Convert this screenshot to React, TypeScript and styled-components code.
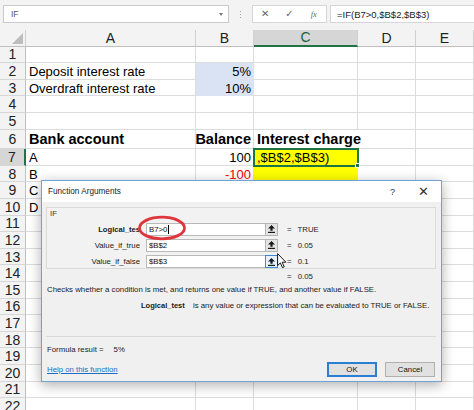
import React from "react";
import styled, { createGlobalStyle } from "styled-components";

const GlobalStyle = createGlobalStyle`
  html, body { margin: 0; padding: 0; background: #fff; }
  body { font-family: "Liberation Sans", Arial, sans-serif; }
  * { box-sizing: border-box; }
`;

const Screen = styled.div`
  position: relative;
  width: 474px;
  height: 410px;
  overflow: hidden;
  background: #fff;
  display: flex;
  flex-direction: column;
`;

/* ---------- formula bar ---------- */
const TopBar = styled.div`
  flex: none;
  height: 30px;
  background: #f3f3f3;
  display: flex;
  align-items: flex-start;
  padding: 5px 0 0 3px;
`;

const NameBox = styled.div`
  width: 226px;
  height: 18px;
  background: #fff;
  border: 1px solid #cacaca;
  display: flex;
  align-items: center;
  justify-content: space-between;
  padding: 0 5px 0 7px;
  font-size: 8.5px;
  color: #555;
`;

const DropArrow = styled.span`
  width: 0;
  height: 0;
  border-left: 2.5px solid transparent;
  border-right: 2.5px solid transparent;
  border-top: 3px solid #7a7a7a;
`;

const Grip = styled.div`
  width: 23px;
  height: 18px;
  display: flex;
  flex-direction: column;
  align-items: center;
  justify-content: center;
  gap: 2px;
`;

const GripDot = styled.span`
  width: 1px;
  height: 1px;
  background: #a8a8a8;
`;

const FxGroup = styled.div`
  width: 75px;
  height: 18px;
  background: #fff;
  border: 1px solid #d6d6d6;
  display: grid;
  grid-template-columns: repeat(3, 1fr);
  align-items: center;
  justify-items: center;
`;

const FxGlyph = styled.span<{ $green?: boolean; $italic?: boolean }>`
  font-size: ${(p) => (p.$italic ? "8.5px" : "10px")};
  font-family: ${(p) => (p.$italic ? '"Liberation Serif", serif' : '"DejaVu Sans", sans-serif')};
  font-style: ${(p) => (p.$italic ? "italic" : "normal")};
  color: ${(p) => (p.$green ? "#4d7a52" : "#666")};
  line-height: 1;
`;

const FormulaInput = styled.div`
  margin-left: 3px;
  flex: 1;
  height: 18px;
  background: #fff;
  border: 1px solid #d6d6d6;
  border-right: none;
  display: flex;
  align-items: center;
  padding-left: 6px;
  font-size: 9.5px;
  color: #222;
`;

/* ---------- sheet ---------- */
const Sheet = styled.div`
  flex: none;
  display: grid;
  grid-template-columns: 26px 170px 58px 104px 58px 58px;
  grid-template-rows: 16.7px repeat(5, 16.6px) 19.6px repeat(16, 16.6px);
`;

const Corner = styled.div`
  background: #f3f3f3;
  border-right: 1px solid #cfcfcf;
  border-bottom: 1px solid #bfbfbf;
  display: flex;
  align-items: flex-end;
  justify-content: flex-end;
  padding: 0 2px 2px 0;
`;

const ColHeader = styled.div<{ $active?: boolean }>`
  background: ${(p) => (p.$active ? "#d6d6d6" : "#f3f3f3")};
  border-right: 1px solid #d0d0d0;
  border-bottom: ${(p) => (p.$active ? "2px solid #217346" : "1px solid #bfbfbf")};
  display: flex;
  align-items: center;
  justify-content: center;
  font-size: 14px;
  color: ${(p) => (p.$active ? "#1e5e3a" : "#222")};
  line-height: 1;
`;

const RowHeader = styled.div<{ $active?: boolean }>`
  background: ${(p) => (p.$active ? "#d6d6d6" : "#f3f3f3")};
  border-right: ${(p) => (p.$active ? "2px solid #217346" : "1px solid #bfbfbf")};
  border-bottom: 1px solid #d6d6d6;
  display: flex;
  align-items: center;
  justify-content: center;
  font-size: 14px;
  color: #222;
  line-height: 1;
`;

const Cell = styled.div<{
  $align?: "left" | "right";
  $bold?: boolean;
  $color?: string;
  $bg?: string;
  $overflow?: boolean;
  $selected?: boolean;
}>`
  position: relative;
  z-index: ${(p) => (p.$selected ? 3 : p.$overflow ? 1 : 0)};
  background: ${(p) => p.$bg ?? "transparent"};
  border-right: 1px solid ${(p) => (p.$bg ? p.$bg : p.$overflow ? "transparent" : "#dcdcdc")};
  border-bottom: 1px solid ${(p) => p.$bg ?? "#dcdcdc"};
  outline: ${(p) => (p.$selected ? "2px solid #217346" : "none")};
  outline-offset: -1px;
  display: flex;
  align-items: center;
  justify-content: ${(p) => (p.$align === "right" ? "flex-end" : "flex-start")};
  padding: 1px 2px 0 3px;
  font-size: ${(p) => (p.$bold ? "14.5px" : "13px")};
  font-weight: ${(p) => (p.$bold ? 700 : 400)};
  color: ${(p) => p.$color ?? "#000"};
  white-space: nowrap;
  overflow: visible;
  line-height: 1;
`;

const FillHandle = styled.span`
  position: absolute;
  right: -3px;
  bottom: -3px;
  width: 5px;
  height: 5px;
  background: #217346;
  border: 1px solid #fff;
`;

/* ---------- dialog ---------- */
const Dialog = styled.div`
  position: absolute;
  left: 41px;
  top: 180px;
  width: 401px;
  height: 202px;
  border: 1px solid #6fa3d6;
  background: #f0f0f0;
  box-shadow: 0 3px 12px rgba(0, 0, 0, 0.32);
  display: flex;
  flex-direction: column;
  font-size: 7.8px;
  color: #1a1a1a;
  z-index: 10;
`;

const TitleBar = styled.div`
  flex: none;
  height: 21px;
  background: #fff;
  display: flex;
  align-items: center;
  padding: 0 2px 0 6px;
`;

const Title = styled.span`
  font-size: 8.2px;
  color: #222;
`;

const TitleButton = styled.span<{ $first?: boolean }>`
  width: 31px;
  height: 21px;
  display: flex;
  align-items: center;
  justify-content: center;
  margin-left: ${(p) => (p.$first ? "auto" : "0")};
  font-size: ${(p) => (p.$first ? "9px" : "13px")};
  font-family: ${(p) => (p.$first ? '"Liberation Sans", sans-serif' : '"DejaVu Sans", sans-serif')};
  font-weight: 300;
  color: #333;
`;

const Body = styled.div`
  flex: 1;
  display: flex;
  flex-direction: column;
  padding: 0 5px 0 4px;
`;

const GroupBox = styled.div`
  margin-top: 5px;
  height: 62px;
  border: 1px solid #dadada;
  background: #f2f2f2;
  padding: 1px 0 0 0;
  display: flex;
  flex-direction: column;
`;

const GroupLabel = styled.div`
  padding-left: 3px;
  height: 10px;
  line-height: 10px;
  color: #333;
`;

const ArgList = styled.div`
  margin-top: 2px;
  display: grid;
  grid-auto-rows: 16.3px;
`;

const ArgRow = styled.div`
  display: flex;
  align-items: center;
`;

const ArgLabel = styled.span<{ $bold?: boolean }>`
  flex: none;
  width: 93px;
  margin-right: 6px;
  display: flex;
  justify-content: flex-end;
  font-weight: ${(p) => (p.$bold ? 700 : 400)};
  font-size: ${(p) => (p.$bold ? "7.6px" : "7.8px")};
  white-space: nowrap;
`;

const ArgInput = styled.div`
  width: 119px;
  height: 13px;
  background: #fff;
  border: 1px solid #b9b9b9;
  border-right: none;
  display: flex;
  align-items: center;
  padding-left: 2px;
  color: #111;
`;

const Caret = styled.span`
  display: inline-block;
  width: 1px;
  height: 9px;
  background: #000;
  margin-left: 0.5px;
`;

const RefButton = styled.div<{ $hover?: boolean }>`
  width: 13px;
  height: 13px;
  background: ${(p) => (p.$hover ? "#e5f1fb" : "#e4e4e4")};
  border: 1px solid ${(p) => (p.$hover ? "#3c8ad6" : "#b4b4b4")};
  display: flex;
  align-items: center;
  justify-content: center;
`;

const ArgResult = styled.span<{ $flush?: boolean }>`
  margin-left: ${(p) => (p.$flush ? "0" : "9px")};
  word-spacing: 4px;
`;

const ResultLine = styled.div<{ $top: number; $indent: number }>`
  margin-top: ${(p) => p.$top}px;
  padding-left: ${(p) => p.$indent}px;
  height: 10px;
  line-height: 10px;
  white-space: nowrap;
`;

const Strong = styled.span`
  font-weight: 700;
  font-size: 7.5px;
  margin-right: 6px;
`;

const Separator = styled.div`
  margin-top: 25px;
  height: 1px;
  background: #d9d9d9;
`;

const ResultValue = styled.span`
  margin-left: 10px;
`;

const Footer = styled.div`
  margin-top: 7px;
  height: 15px;
  display: flex;
  align-items: center;
  padding: 0 1px 0 1px;
  gap: 8px;
`;

const HelpLink = styled.a`
  color: #1a6fc4;
  text-decoration: underline;
  margin-right: auto;
`;

const DlgButton = styled.button<{ $default?: boolean }>`
  width: 50px;
  height: 15px;
  padding: 0;
  font-family: "Liberation Sans", Arial, sans-serif;
  font-size: 7.8px;
  color: #111;
  background: #e1e1e1;
  border: 1px solid ${(p) => (p.$default ? "#2a7fd4" : "#b0b0b0")};
  box-shadow: ${(p) => (p.$default ? "inset 0 0 0 1px #2a7fd4" : "none")};
`;

const Circle = styled.svg`
  position: absolute;
  left: 96px;
  top: 33px;
  overflow: visible;
`;

const Pointer = styled.svg`
  position: absolute;
  left: 235px;
  top: 72px;
`;

const CornerTriangle = () => (
  <svg width="11" height="11" viewBox="0 0 11 11">
    <polygon points="11,0 11,11 0,11" fill="#bdbdbd" />
  </svg>
);

const RefIcon = () => (
  <svg width="7" height="8" viewBox="0 0 7 8">
    <polygon points="3.5,0 7,3.6 4.6,3.6 4.6,5.8 2.4,5.8 2.4,3.6 0,3.6" fill="#1a1a1a" />
    <rect x="0" y="6.8" width="7" height="1.2" fill="#1a1a1a" />
  </svg>
);

type ColKey = "A" | "B" | "C" | "D" | "E";
interface CellData {
  text?: string;
  align?: "left" | "right";
  bold?: boolean;
  color?: string;
  bg?: string;
  selected?: boolean;
  overflow?: boolean;
}

const COLS: ColKey[] = ["A", "B", "C", "D", "E"];
const ROW_COUNT = 22;

const DATA: Record<number, Partial<Record<ColKey, CellData>>> = {
  2: {
    A: { text: "Deposit interest rate" },
    B: { text: "5%", align: "right", bg: "#dae3f3" },
  },
  3: {
    A: { text: "Overdraft interest rate" },
    B: { text: "10%", align: "right", bg: "#dae3f3" },
  },
  6: {
    A: { text: "Bank account", bold: true },
    B: { text: "Balance", bold: true, align: "right" },
    C: { text: "Interest charge", bold: true, overflow: true },
  },
  7: {
    A: { text: "A" },
    B: { text: "100", align: "right" },
    C: { text: ",$B$2,$B$3)", bg: "#ffff00", selected: true },
  },
  8: {
    A: { text: "B" },
    B: { text: "-100", align: "right", color: "#ff0000" },
    C: { bg: "#ffff00" },
  },
  9: { A: { text: "C" }, C: { bg: "#ffff00" } },
  10: { A: { text: "D" }, C: { bg: "#ffff00" } },
};

const ARGS = [
  { label: "Logical_tes", bold: true, value: "B7>0", caret: true, result: "= TRUE" },
  { label: "Value_if_true", value: "$B$2", result: "= 0.05" },
  { label: "Value_if_false", value: "$B$3", hover: true, result: "= 0.1" },
];

export default function App() {
  const rows = Array.from({ length: ROW_COUNT }, (_, i) => i + 1);
  return (
    <>
      <GlobalStyle />
      <Screen>
        <TopBar>
          <NameBox>
            <span>IF</span>
            <DropArrow />
          </NameBox>
          <Grip>
            <GripDot />
            <GripDot />
            <GripDot />
          </Grip>
          <FxGroup>
            <FxGlyph>✕</FxGlyph>
            <FxGlyph>✓</FxGlyph>
            <FxGlyph $green $italic>
              fx
            </FxGlyph>
          </FxGroup>
          <FormulaInput>=IF(B7&gt;0,$B$2,$B$3)</FormulaInput>
        </TopBar>

        <Sheet>
          <Corner>
            <CornerTriangle />
          </Corner>
          {COLS.map((c) => (
            <ColHeader key={c} $active={c === "C"}>
              {c}
            </ColHeader>
          ))}
          {rows.map((r) => (
            <React.Fragment key={r}>
              <RowHeader $active={r === 7}>{r}</RowHeader>
              {COLS.map((c) => {
                const d = DATA[r]?.[c];
                return (
                  <Cell
                    key={c}
                    $align={d?.align}
                    $bold={d?.bold}
                    $color={d?.color}
                    $bg={d?.bg}
                    $overflow={d?.overflow}
                    $selected={d?.selected}
                  >
                    {d?.text}
                    {d?.selected && <FillHandle />}
                  </Cell>
                );
              })}
            </React.Fragment>
          ))}
        </Sheet>

        <Dialog>
          <TitleBar>
            <Title>Function Arguments</Title>
            <TitleButton $first>?</TitleButton>
            <TitleButton>✕</TitleButton>
          </TitleBar>
          <Body>
            <GroupBox>
              <GroupLabel>IF</GroupLabel>
              <ArgList>
                {ARGS.map((a) => (
                  <ArgRow key={a.label}>
                    <ArgLabel $bold={a.bold}>{a.label}</ArgLabel>
                    <ArgInput>
                      {a.value}
                      {a.caret && <Caret />}
                    </ArgInput>
                    <RefButton $hover={a.hover}>
                      <RefIcon />
                    </RefButton>
                    <ArgResult>{a.result}</ArgResult>
                  </ArgRow>
                ))}
              </ArgList>
            </GroupBox>
            <ResultLine $top={3} $indent={241}>
              <ArgResult $flush>= 0.05</ArgResult>
            </ResultLine>
            <ResultLine $top={3} $indent={1}>
              Checks whether a condition is met, and returns one value if TRUE, and another value if FALSE.
            </ResultLine>
            <ResultLine $top={6} $indent={95}>
              <Strong>Logical_test</Strong> is any value or expression that can be evaluated to TRUE or FALSE.
            </ResultLine>
            <Separator />
            <ResultLine $top={8} $indent={1}>
              Formula result =<ResultValue>5%</ResultValue>
            </ResultLine>
            <Footer>
              <HelpLink>Help on this function</HelpLink>
              <DlgButton $default>OK</DlgButton>
              <DlgButton>Cancel</DlgButton>
            </Footer>
          </Body>

          <Circle width="48" height="28" viewBox="0 0 48 28">
            <ellipse cx="24" cy="14" rx="22.5" ry="10.8" fill="none" stroke="#e0353c" strokeWidth="2.8" />
          </Circle>
          <Pointer width="10" height="16" viewBox="0 0 10 16">
            <path
              d="M0.6 0.6 L0.6 12.5 L3.4 9.9 L5.4 14.6 L7.2 13.8 L5.2 9.2 L8.9 9.2 Z"
              fill="#fff"
              stroke="#000"
              strokeWidth="0.9"
              strokeLinejoin="round"
            />
          </Pointer>
        </Dialog>
      </Screen>
    </>
  );
}
